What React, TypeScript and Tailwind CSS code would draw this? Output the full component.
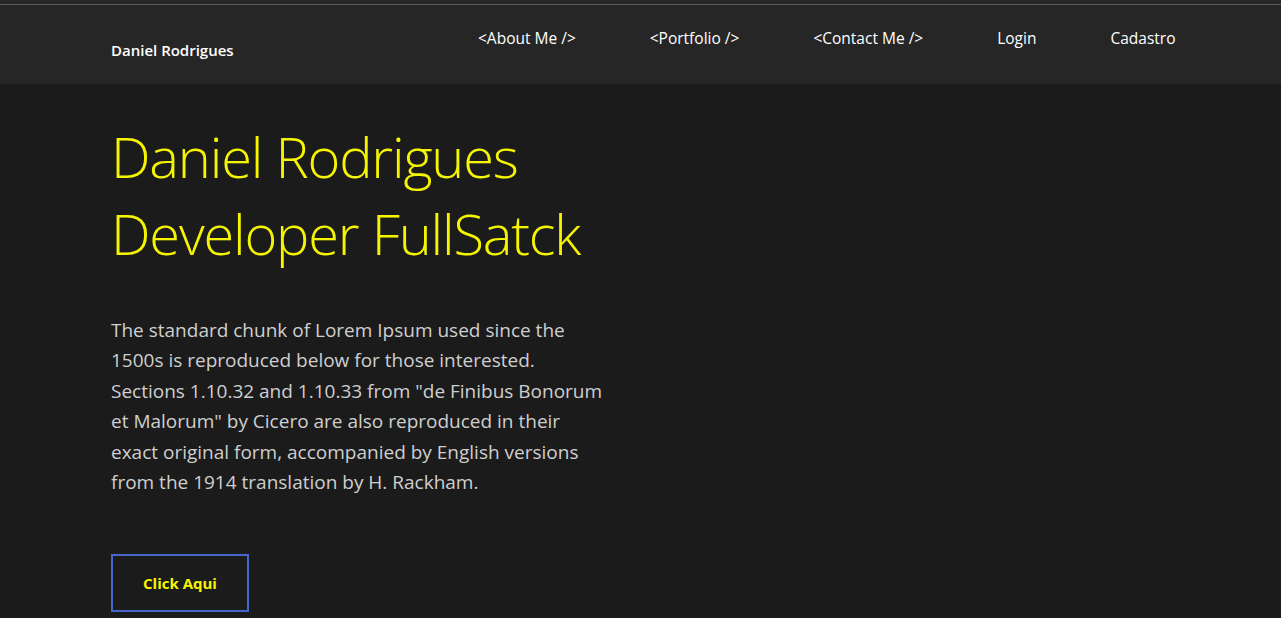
export default function App() {
  const links = ["<About Me />", "<Portfolio />", "<Contact Me />", "Login", "Cadastro"];

  return (
    <div className="min-h-[618px] bg-[#1b1b1b] font-['Open_Sans',sans-serif]">
      <div className="h-[4px] bg-[#262626]" />
      <header className="h-[80px] border-t border-[#5c5c5c] bg-[#262626]">
        <div className="flex items-start pl-[111px]">
          <span className="mt-[34px] w-[367px] text-[15px] font-semibold text-white">Daniel Rodrigues</span>
          <nav className="mt-[22px] flex gap-[74px] text-[15.5px] text-white">
            {links.map((l) => (
              <a key={l} href="#">
                {l}
              </a>
            ))}
          </nav>
        </div>
      </header>

      <main className="pl-[111px] pt-[34px]">
        <h1 className="text-[56px] font-light leading-[77px] tracking-[-1.2px] text-[#f5f500]">
          Daniel Rodrigues
          <br />
          Developer FullSatck
        </h1>

        <p className="mt-[43px] text-[19px] leading-[30.4px] text-[#cfcfcf]">
          The standard chunk of Lorem Ipsum used since the
          <br />
          1500s is reproduced below for those interested.
          <br />
          Sections 1.10.32 and 1.10.33 from "de Finibus Bonorum
          <br />
          et Malorum" by Cicero are also reproduced in their
          <br />
          exact original form, accompanied by English versions
          <br />
          from the 1914 translation by H. Rackham.
        </p>

        <button className="mt-[57px] h-[58px] w-[138px] border-2 border-[#4567cc] text-[15px] font-bold text-[#f5f500]">
          Click Aqui
        </button>
      </main>
    </div>
  );
}
